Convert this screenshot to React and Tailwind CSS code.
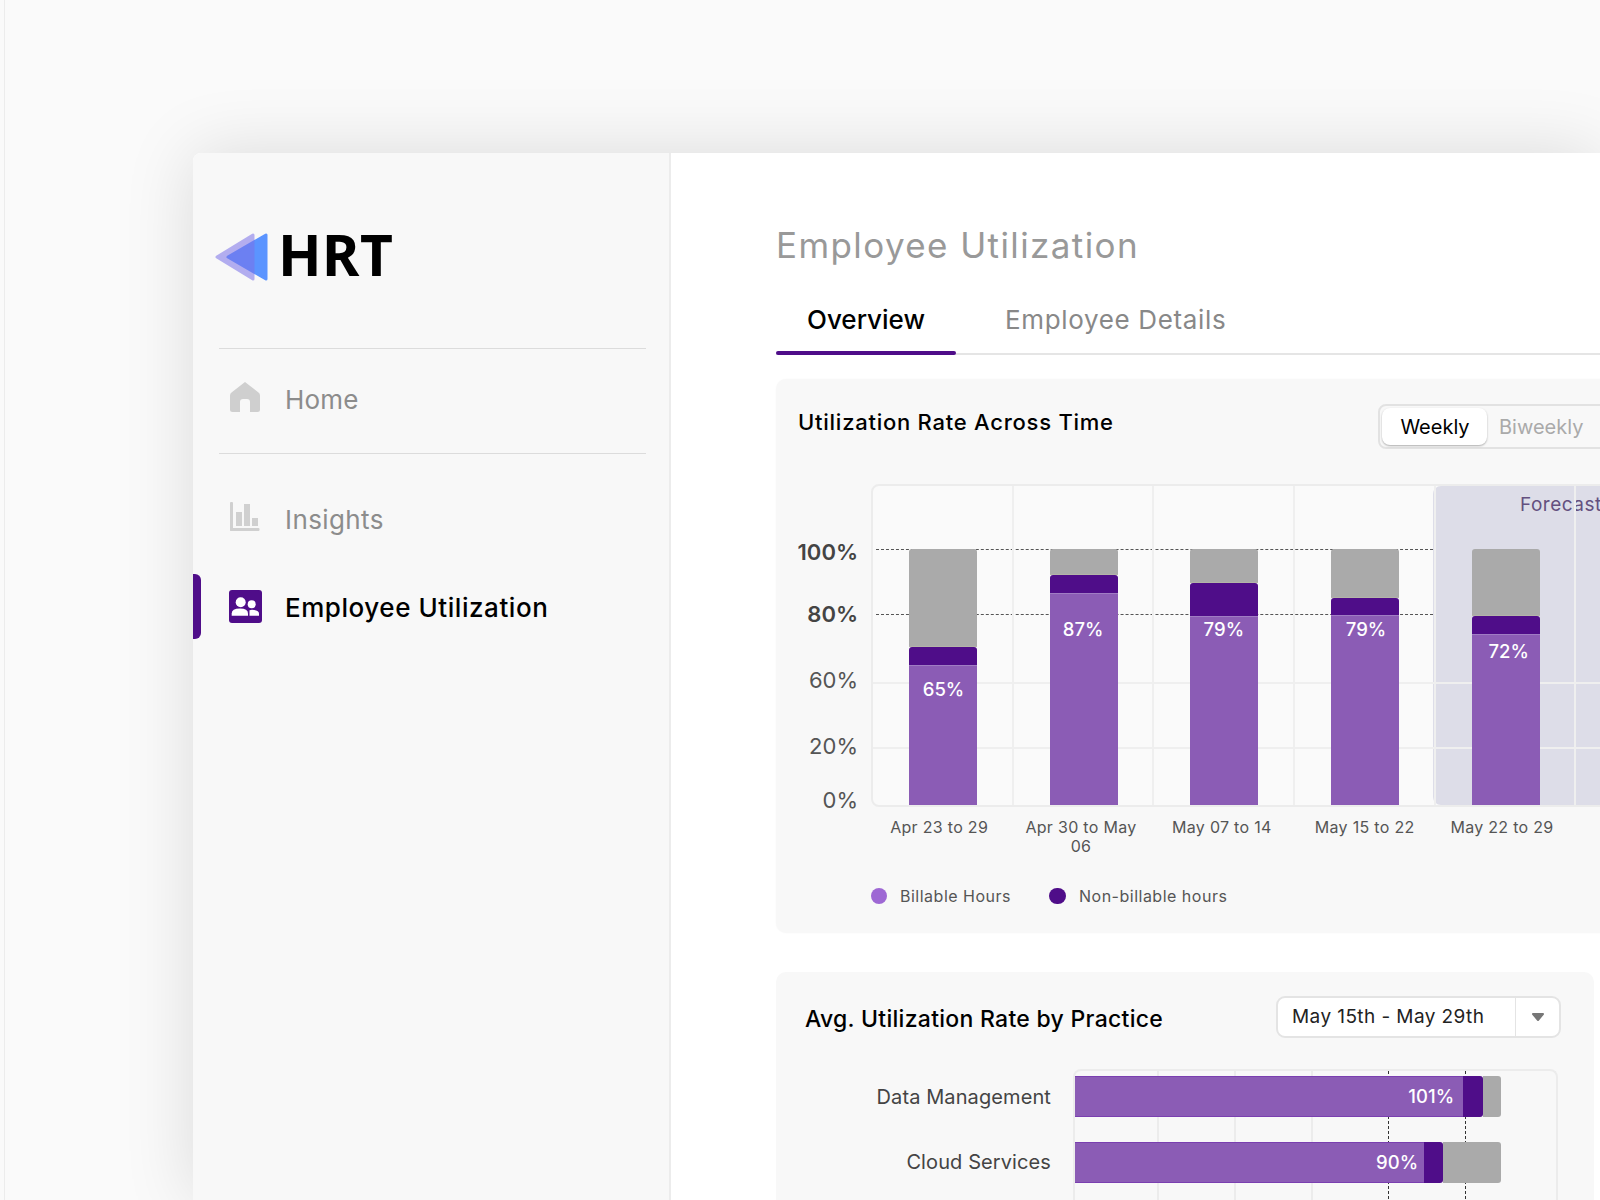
const weeks = [
  { label: "Apr 23 to 29", shift: "pr-[5px]", gray: "h-[98px]", dark: "h-[18px]", pct: "65%", pad: "pt-[11px] pl-[1px]" },
  { label: "Apr 30 to May", label2: "06", shift: "pr-[4px]", gray: "h-[26px]", dark: "h-[18px]", pct: "87%", pad: "pt-[23px] pr-[1px]" },
  { label: "May 07 to 14", shift: "pr-[5px]", gray: "h-[34px]", dark: "h-[33px]", pct: "79%", pad: "pt-0 pr-[1px]" },
  { label: "May 15 to 22", shift: "pr-[2px]", gray: "h-[49px]", dark: "h-[17px]", pct: "79%", pad: "pt-[1px] pl-[2px]" },
  { label: "May 22 to 29", shift: "pr-[10px]", gray: "h-[67px]", dark: "h-[18px]", pct: "72%", pad: "pt-[4px] pl-[6px]" },
  { label: "", shift: "", gray: "", dark: "", pct: "", pad: "" },
];

const yLabels = [
  { text: "100%", cls: "mt-[53px] font-semibold text-[#444]" },
  { text: "80%", cls: "mt-[32px] font-semibold text-[#444]" },
  { text: "60%", cls: "mt-[36px] text-[#555]" },
  { text: "20%", cls: "mt-[36px] text-[#555]" },
  { text: "0%", cls: "mt-[24px] text-[#555]" },
];

function Logo() {
  return (
    <svg width="54" height="50" viewBox="0 0 54 50">
      <polygon points="14,25 52,3 52,47" fill="#5b94ff" stroke="#5b94ff" strokeWidth="3" strokeLinejoin="round" />
      <polygon points="3,25 39,3 39,47" fill="#7a70e8" stroke="#7a70e8" strokeWidth="3" strokeLinejoin="round" opacity="0.55" />
    </svg>
  );
}

function HomeIcon() {
  return (
    <svg className="mb-[4px]" width="30" height="30" viewBox="0 0 30 30">
      <path fill="#cfcfcf" d="M15 0 L28.5 10.5 Q30 11.7 30 13.5 V27.5 Q30 30 27.5 30 H20 V20 Q20 17 17 17 H13 Q10 17 10 20 V30 H2.5 Q0 30 0 27.5 V13.5 Q0 11.7 1.5 10.5 Z" />
    </svg>
  );
}

function InsightsIcon() {
  return (
    <svg className="mb-[4px]" width="30" height="30" viewBox="0 0 30 30">
      <g fill="#d0d0d0">
        <rect x="0" y="0" width="3" height="29" rx="1" />
        <rect x="0" y="26" width="29.5" height="3" rx="1" />
        <rect x="6" y="10" width="6" height="14" />
        <rect x="14" y="2" width="6" height="22" />
        <rect x="22" y="16" width="6" height="8" />
      </g>
    </svg>
  );
}

function EmployeeIcon() {
  return (
    <svg width="33" height="33" viewBox="0 0 33 33">
      <rect width="33" height="33" rx="3" fill="#4f0d89" />
      <g fill="#fff">
        <circle cx="11.7" cy="12.3" r="5" />
        <circle cx="22.7" cy="14.3" r="4" />
        <path d="M2.7 25.7 V23.5 Q2.7 18.5 11 18.5 Q19 18.5 19 23.5 V25.7 Z" />
        <path d="M20.5 25.7 V20.2 Q21.5 19.8 23 19.8 Q30 19.8 30 23.5 V25.7 Z" />
      </g>
    </svg>
  );
}

function Sidebar() {
  return (
    <aside className="w-[478px] shrink-0 bg-[#f8f8f8] border-r-2 border-[#ececec] relative">
      <div className="flex pl-[21px] pt-[79px] h-[195px] items-start">
        <Logo />
        <span className="ml-[10px] mt-[-11px] font-['Noto_Sans',sans-serif] text-[57px] leading-[66px] font-bold text-black tracking-[0.5px]">HRT</span>
      </div>
      <div className="ml-[26px] w-[427px] border-t border-[#dcdcdc]" />
      <div className="flex items-center h-[104px] pl-[37px] pb-[4px]">
        <HomeIcon />
        <span className="ml-[25px] text-[26px] tracking-[0.2px] text-[#8c8c8c]">Home</span>
      </div>
      <div className="ml-[26px] w-[427px] border-t border-[#dcdcdc]" />
      <div className="flex items-center h-[128px] pl-[37px] pt-[2px]">
        <InsightsIcon />
        <span className="ml-[25px] text-[26px] tracking-[0.4px] text-[#8c8c8c]">Insights</span>
      </div>
      <div className="flex items-center h-[65px] pl-[36px] relative mt-[-8px]">
        <div className="absolute left-0 top-0 w-[8px] h-[65px] bg-[#4f0d89] rounded-r-[6px]" />
        <EmployeeIcon />
        <span className="ml-[23px] mt-[2px] text-[26px] tracking-[0.55px] font-medium text-black">Employee Utilization</span>
      </div>
    </aside>
  );
}

function UtilizationCard() {
  return (
    <section className="w-[1000px] h-[554px] bg-[#f8f8f8] rounded-[10px] shadow-[0_0_2px_rgba(0,0,0,0.03)]">
      <div className="flex items-start justify-between pl-[22px] pt-[25px] h-[105px]">
        <h2 className="text-[22px] leading-[36px] tracking-[0.75px] font-medium text-black">Utilization Rate Across Time</h2>
        <div className="w-[398px] h-[45px] border-2 border-[#e2e2e2] rounded-[8px] flex items-center pl-[2px]">
          <div className="w-[105px] h-[37px] pl-[1px] bg-white rounded-[8px] shadow-[0_1px_2px_rgba(0,0,0,0.3)] flex items-center justify-center text-[20px] text-black">Weekly</div>
          <div className="ml-[12px] text-[20px] text-[#aaa]">Biweekly</div>
        </div>
      </div>

      <div className="flex">
        <div className="w-[82px] flex flex-col items-end text-[22px] leading-[30px]">
          {yLabels.map((y) => (
            <span key={y.text} className={y.cls}>{y.text}</span>
          ))}
        </div>
        <div className="ml-[13px] relative w-[848px] h-[323px] border-2 border-[#ececec] rounded-[8px] bg-[#fafafa]">
          <div className="absolute left-[560px] top-0 bottom-0 right-0 bg-[#dddde8] rounded-l-[8px]">
            <span className="absolute left-[87px] top-[6px] text-[19px] leading-[26px] tracking-[0.5px] text-[#64507f]">Forecast</span>
          </div>
          <div className="absolute left-0 right-0 top-[196px] border-t-2 border-[#efefef]" />
          <div className="absolute left-0 right-0 top-[261px] border-t-2 border-[#efefef]" />
          <div className="absolute left-[3px] w-[557px] top-[63px] border-t border-dashed border-[#555]" />
          <div className="absolute left-[3px] w-[557px] top-[128px] border-t border-dashed border-[#555]" />
          <div className="relative grid grid-cols-6 h-full">
            {weeks.map((w, i) => (
              <div key={i} className="border-r-2 border-[#efefef] flex flex-col justify-end pl-[36px]">
                {w.pct && (
                  <div className="w-[68px] h-[256px] flex flex-col">
                    <div className={`${w.gray} bg-[#aaaaaa] rounded-t-[3px] border-b border-[#b4b4a8]`} />
                    <div className={`${w.dark} bg-[#4f0d89] rounded-t-[3px]`} />
                    <div className="flex-1 bg-[#8b5cb5] border-t border-[#a07cc4] text-white text-[18.5px] leading-[24px] text-center font-medium">
                      <div className={w.pad}>{w.pct}</div>
                    </div>
                  </div>
                )}
              </div>
            ))}
          </div>
        </div>
      </div>

      <div className="ml-[95px] grid grid-cols-6 w-[848px] mt-[3px] text-[16px] leading-[19px] tracking-[0.3px] text-[#555] text-center">
        {weeks.map((w, i) => (
          <div key={i} className={w.shift}>
            {w.label}
            {w.label2 && <br />}
            {w.label2}
          </div>
        ))}
      </div>

      <div className="ml-[95px] mt-[30px] flex items-center text-[16px] leading-[20px] tracking-[0.5px] text-[#555]">
        <div className="w-[178px] flex items-center">
          <span className="w-[16px] h-[16px] rounded-full bg-[#9e68d4]" />
          <span className="ml-[13px]">Billable Hours</span>
        </div>
        <div className="flex items-center">
          <span className="w-[17px] h-[16px] rounded-full bg-[#4f0d89]" />
          <span className="ml-[13px]">Non-billable hours</span>
        </div>
      </div>
    </section>
  );
}

function PracticeBar({ purple, dark, gray, pct, pad }) {
  return (
    <div className="flex w-[426px] h-[41px] rounded-r-[3px] overflow-hidden mb-[25px]">
      <div className={`${purple} bg-[#8b5cb5] border-y border-[#7a3fb0] text-white text-[18.5px] leading-[39px] text-right font-medium ${pad}`}>{pct}</div>
      <div className={`${dark} bg-[#4f0d89] rounded-r-[3px] z-10`} />
      <div className={`${gray} bg-[#aaaaaa]`} />
    </div>
  );
}

function PracticeCard() {
  return (
    <section className="mt-[39px] w-[818px] h-[300px] bg-[#f8f8f8] rounded-[10px]">
      <div className="flex items-start justify-between pl-[29px] pr-[33px] pt-[24px] h-[66px]">
        <h2 className="pt-[2px] text-[23px] leading-[42px] tracking-[0.28px] font-medium text-black">Avg. Utilization Rate by Practice</h2>
        <div className="w-[285px] h-[42px] bg-white border-2 border-[#e4e4e4] rounded-[9px] flex items-center">
          <span className="w-[238px] pl-[14px] text-[19px] tracking-[0.42px] text-[#222] border-r border-[#e4e4e4] leading-[38px]">May 15th - May 29th</span>
          <svg className="ml-[15px]" width="14" height="10" viewBox="0 0 14 10">
            <polygon points="2,2 12,2 7,8" fill="#777" stroke="#777" strokeWidth="2" strokeLinejoin="round" />
          </svg>
        </div>
      </div>
      <div className="flex mt-[31px]">
        <div className="w-[275px] text-right text-[20px] leading-[40px] tracking-[0.1px] text-[#444] pt-[8px]">
          <div className="h-[65px]">Data Management</div>
          <div>Cloud Services</div>
        </div>
        <div className="ml-[22px] relative w-[485px] h-[200px] border-2 border-b-0 border-[#ececec] rounded-t-[8px] pt-[5px]">
          <div className="absolute top-0 bottom-0 left-[82px] border-l-2 border-[#ececec]" />
          <div className="absolute top-0 bottom-0 left-[159px] border-l-2 border-[#ececec]" />
          <div className="absolute top-0 bottom-0 left-[236px] border-l-2 border-[#ececec]" />
          <div className="absolute top-0 bottom-0 left-[313px] border-l border-dashed border-[#333]" />
          <div className="absolute top-0 bottom-0 left-[390px] border-l border-dashed border-[#333]" />
          <div className="relative">
            <PracticeBar purple="w-[388px]" dark="w-[20px]" gray="w-[18px]" pct="101%" pad="pr-[9px]" />
            <PracticeBar purple="w-[349px]" dark="w-[19px]" gray="w-[58px]" pct="90%" pad="pr-[6px]" />
          </div>
        </div>
      </div>
    </section>
  );
}

export default function App() {
  return (
    <div className="w-[1600px] h-[1200px] overflow-hidden bg-[#fafafa] font-[Inter,sans-serif]">
      <div className="ml-[4px] h-full border-l border-[#ececec] pt-[153px] pl-[188px]">
        <div className="w-[1407px] h-[1047px] flex rounded-tl-[8px] bg-white shadow-[0_0_70px_rgba(0,0,0,0.13)] overflow-hidden">
          <Sidebar />
          <main className="flex-1 pl-[105px] pt-[70px] overflow-hidden">
            <h1 className="text-[35px] leading-[44px] tracking-[1.4px] text-[#999]">Employee Utilization</h1>
            <div className="mt-[28px] w-[1000px] h-[60px] border-b-2 border-[#e5e5e5] flex">
              <div className="relative w-[180px] text-center text-[26px] leading-[50px] font-medium text-black">
                Overview
                <div className="absolute left-0 right-0 bottom-[-2px] h-[4px] rounded-[2px] bg-[#4f0d89]" />
              </div>
              <div className="ml-[49px] text-[26px] leading-[50px] tracking-[0.65px] text-[#888]">Employee Details</div>
            </div>
            <div className="mt-[24px]">
              <UtilizationCard />
              <PracticeCard />
            </div>
          </main>
        </div>
      </div>
    </div>
  );
}
